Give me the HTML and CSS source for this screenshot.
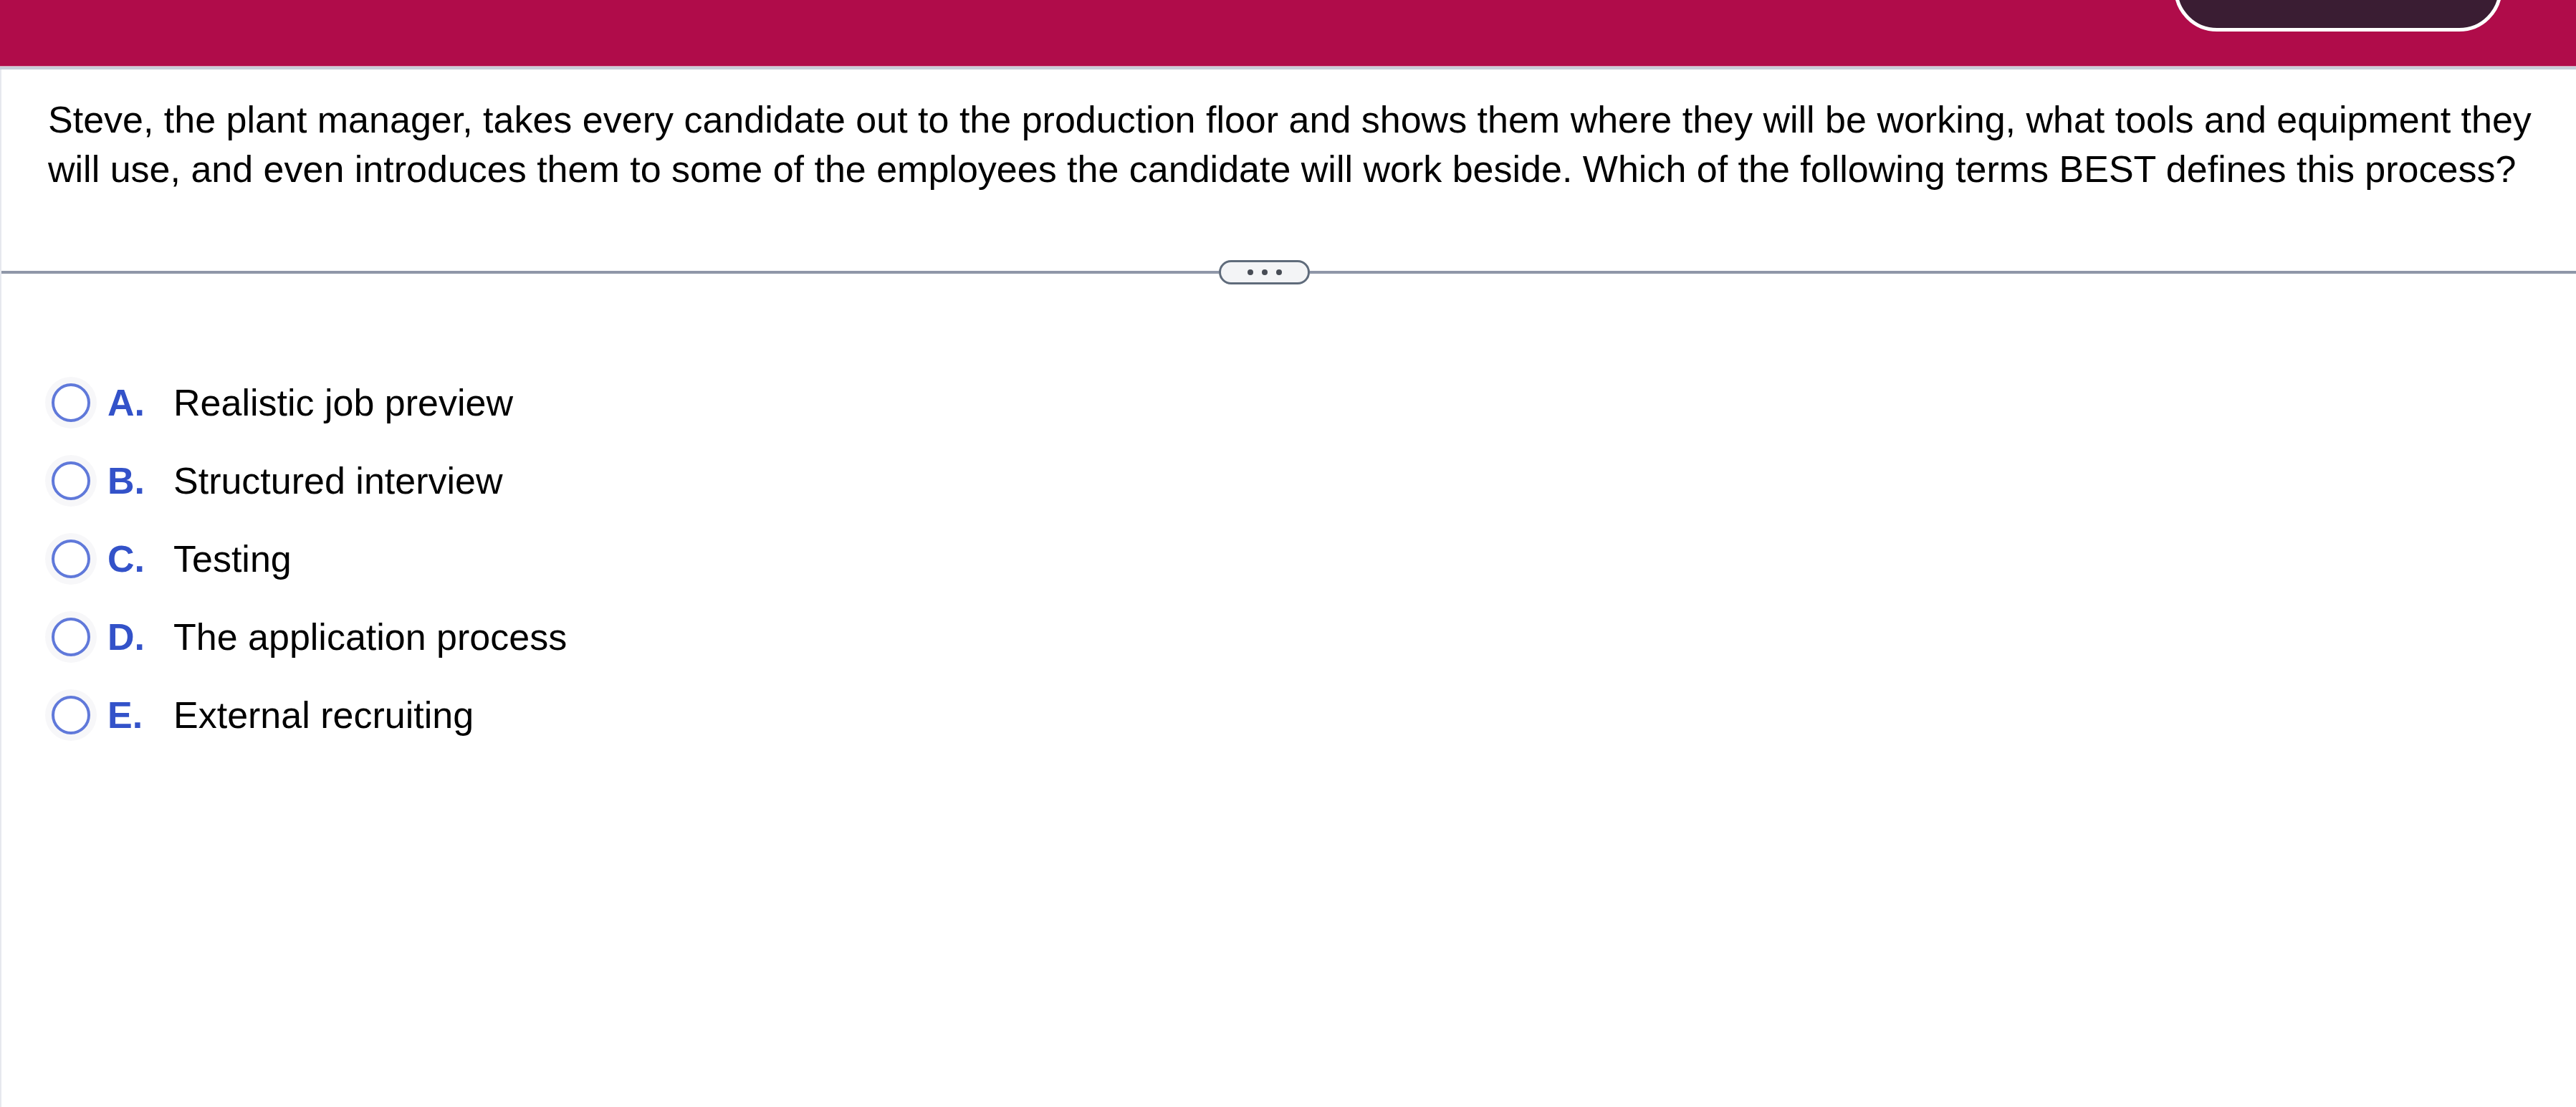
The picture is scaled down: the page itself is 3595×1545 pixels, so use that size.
FILE: index.html
```html
<!DOCTYPE html>
<html lang="en">
<head>
  <meta charset="UTF-8">
  <meta name="viewport" content="width=device-width, initial-scale=1.0">
  <link rel="stylesheet" href="styles.css">
  <title>Question</title>
</head>
<body>
  <header class="topbar">
    <div class="topbar-btn"></div>
  </header>

  <main class="page">
    <p class="question">Steve, the plant manager, takes every candidate out to the production floor and shows them where they will be working, what tools and equipment they will use, and even introduces them to some of the employees the candidate will work beside. Which of the following terms BEST defines this process?</p>

    <div class="divider">
      <div class="line"></div>
      <button class="more"><span></span><span></span><span></span></button>
      <div class="line"></div>
    </div>

    <ul class="choices">
      <li><span class="radio"></span><span class="letter">A.</span><span class="answer">Realistic job preview</span></li>
      <li><span class="radio"></span><span class="letter">B.</span><span class="answer">Structured interview</span></li>
      <li><span class="radio"></span><span class="letter">C.</span><span class="answer">Testing</span></li>
      <li><span class="radio"></span><span class="letter">D.</span><span class="answer">The application process</span></li>
      <li><span class="radio"></span><span class="letter">E.</span><span class="answer">External recruiting</span></li>
    </ul>
  </main>
</body>
</html>
```

FILE: styles.css
```css
html, body {
  margin: 0;
  height: 100%;
}

body {
  font-family: "Liberation Sans", Arial, sans-serif;
  background-color: #fff;
  color: #000;
  overflow: hidden;
}

.topbar {
  height: 92px;
  background-color: #b00c4a;
  border-bottom: 1px solid #d8a3b8;
  box-shadow: 0 4px 0 #c9ced9;
  display: flex;
  justify-content: flex-end;
  padding-right: 103px;
  overflow: hidden;
}

.topbar-btn {
  width: 448px;
  height: 100px;
  margin-top: -66px;
  background-color: #3a1d33;
  border: 5px solid #fff;
  border-radius: 0 0 60px 60px;
}

.page {
  border-left: 2px solid #e6e8ee;
  margin-top: 4px;
  height: calc(100% - 97px);
  box-sizing: border-box;
}

.question {
  margin: 0;
  padding: 36px 40px 0 65px;
  font-size: 52px;
  line-height: 69px;
}

.divider {
  display: grid;
  grid-template-columns: 1699px auto 1fr;
  align-items: center;
  margin-top: 92px;
}

.line {
  height: 4px;
  background-color: #8f97a8;
}

.more {
  width: 127px;
  height: 34px;
  border: 3px solid #5f6b7b;
  border-radius: 17px;
  background-color: #f3f4f6;
  display: flex;
  justify-content: center;
  align-items: center;
  gap: 12px;
  padding: 0;
}

.more span {
  width: 8px;
  height: 8px;
  border-radius: 50%;
  background-color: #474c55;
}

.choices {
  list-style: none;
  margin: 0;
  padding: 110px 0 0 70px;
}

.choices li {
  display: flex;
  align-items: center;
  height: 109px;
  font-size: 52px;
}

.radio {
  width: 46px;
  height: 46px;
  border: 4px solid #6079da;
  border-radius: 50%;
  box-shadow: 0 0 0 9px #f7f7f9;
  flex-shrink: 0;
}

.letter {
  color: #3352c9;
  font-weight: bold;
  margin-left: 24px;
  width: 92px;
}
```
